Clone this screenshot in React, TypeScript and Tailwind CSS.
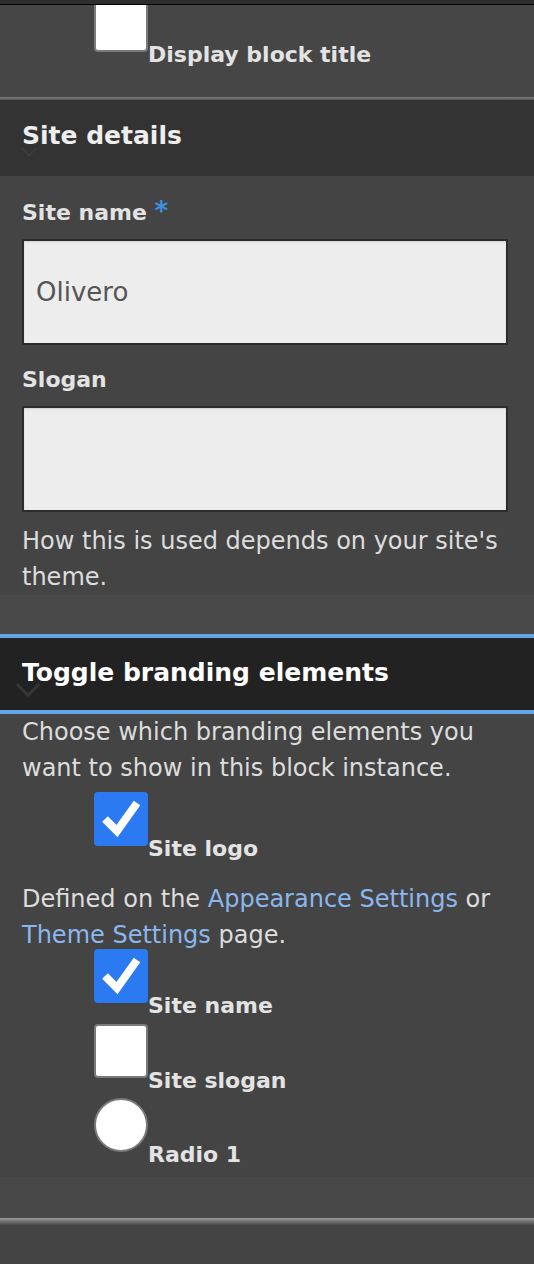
import React from 'react';

function Box({ kind }: { kind: 'checked' | 'unchecked' | 'radio' }) {
  if (kind === 'checked') {
    return (
      <span className="flex h-[54px] w-[54px] shrink-0 rounded-[4px] bg-[#2b7af2]">
        <svg viewBox="0 0 54 54" className="h-full w-full">
          <polyline points="11,27 23,39 43,11" fill="none" stroke="#fff" strokeWidth="8" strokeLinejoin="miter" />
        </svg>
      </span>
    );
  }
  if (kind === 'radio') {
    return <span className="h-[54px] w-[54px] shrink-0 rounded-full border-2 border-[#7a7a7a] bg-white" />;
  }
  return <span className="h-[54px] w-[54px] shrink-0 rounded-[4px] border-2 border-[#7a7a7a] bg-white" />;
}

function Option({ label, kind, className }: { label: string; kind: 'checked' | 'unchecked' | 'radio'; className: string }) {
  return (
    <div className={`flex items-start pl-[72px] ${className}`}>
      <Box kind={kind} />
      <span className="mt-[44px] text-[22px] leading-[26px] font-bold text-[#e3e3e3]">{label}</span>
    </div>
  );
}

function Chevron({ className, color }: { className: string; color: string }) {
  return (
    <svg viewBox="0 0 28 18" className={className}>
      <polyline points="2,2 14,14 26,2" fill="none" stroke={color} strokeWidth="3" />
    </svg>
  );
}

export default function App() {
  return (
    <div className="min-h-screen bg-[#444] font-['DejaVu_Sans',sans-serif]">
      <div className="h-[5px] border-b border-black bg-[#2e2e2e]" />

      <section className="overflow-hidden bg-[#464646] px-[22px] pb-[29px]">
        <Option className="-mt-[7px]" kind="unchecked" label="Display block title" />
      </section>
      <div className="h-[3px] bg-linear-to-b from-[#7c7c7c] to-[#555]" />

      <div className="relative h-[76px] bg-[#333] px-[22px] pt-[21px]">
        <Chevron className="absolute left-[20px] top-[47px] h-[11px] w-[18px]" color="#3d3d3d" />
        <h2 className="relative text-[25px] leading-[30px] font-bold text-[#eee]">Site details</h2>
      </div>
      <div className="bg-[#444] pl-[22px] pr-[26px] pt-[22px]">
        <label className="block text-[22px] leading-[26px] font-bold text-[#e3e3e3]">
          Site name <span className="text-[26px] font-bold text-[#3d8fe0]">*</span>
        </label>
        <div className="mt-[13px] flex h-[106px] items-center border-2 border-[#2c2c2c] bg-[#ededed] pl-[12px] text-[26px] text-[#555] shadow-[inset_0_1px_2px_rgba(0,0,0,0.12)]">
          Olivero
        </div>
        <label className="mt-[22px] block text-[22px] leading-[26px] font-bold text-[#e3e3e3]">Slogan</label>
        <div className="mt-[13px] h-[106px] border-2 border-[#2c2c2c] bg-[#ededed] shadow-[inset_0_1px_2px_rgba(0,0,0,0.12)]" />
        <p className="mt-[11px] text-[24px] leading-[36px] text-[#ddd]">
          How this is used depends on your site's theme.
        </p>
      </div>
      <div className="h-[39px] bg-[#494949]" />

      <div className="h-[4px] bg-[#65a6e2]" />
      <div className="relative h-[72px] bg-[#222] px-[22px] pt-[20px]">
        <Chevron className="absolute left-[14px] top-[44px] h-[17px] w-[28px]" color="#373737" />
        <h2 className="relative text-[25px] leading-[30px] font-bold text-white">Toggle branding elements</h2>
      </div>
      <div className="h-[4px] bg-[#65a6e2]" />

      <div className="bg-[#444] pl-[22px] pr-[26px] pb-[9px]">
        <p className="text-[24px] leading-[36px] text-[#ddd]">
          Choose which branding elements you want to show in this block instance.
        </p>
        <Option className="mt-[6px]" kind="checked" label="Site logo" />
        <p className="mt-[19px] text-[24px] leading-[36px] text-[#ddd]">
          Defined on the <a className="text-[#8ab8ee]">Appearance Settings</a> or{' '}
          <a className="text-[#8ab8ee]">Theme Settings</a> page.
        </p>
        <Option className="-mt-[4px]" kind="checked" label="Site name" />
        <Option className="mt-[5px]" kind="unchecked" label="Site slogan" />
        <Option className="mt-[4px]" kind="radio" label="Radio 1" />
      </div>
      <div className="h-[41px] bg-[#484848]" />
      <div className="h-[7px] bg-linear-to-b from-[#9c9c9c] to-[#4a4a4a]" />
    </div>
  );
}
